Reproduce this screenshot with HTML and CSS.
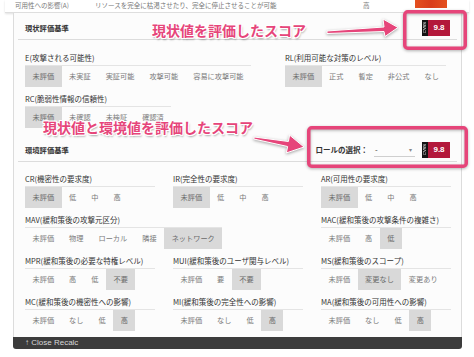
FILE: index.html
```html
<!DOCTYPE html>
<html lang="ja">
<head>
<meta charset="utf-8">
<title>CVSS</title>
<link rel="stylesheet" href="styles.css">
</head>
<body>
<div class="strip">
  <span>可用性への影響(A)</span>
  <span>リソースを完全に枯渇させたり、完全に停止させることが可能</span>
  <span>高</span>
  <span class="strip-bar"></span>
</div>
<div class="panel">
  <section class="sec">
    <div class="sec-head">
      <span class="title">現状評価基準</span>
      <span class="badge push"><span class="badge-tag">CVSS</span><span class="badge-score">9.8</span></span>
    </div>
    <div class="sec-body grid2">
      <div class="group">
        <div class="lbl">E(攻撃される可能性)</div>
        <div class="opts"><span class="opt on">未評価</span><span class="opt">未実証</span><span class="opt">実証可能</span><span class="opt">攻撃可能</span><span class="opt">容易に攻撃可能</span></div>
      </div>
      <div class="group">
        <div class="lbl">RL(利用可能な対策のレベル)</div>
        <div class="opts"><span class="opt on">未評価</span><span class="opt">正式</span><span class="opt">暫定</span><span class="opt">非公式</span><span class="opt">なし</span></div>
      </div>
      <div class="group">
        <div class="lbl">RC(脆弱性情報の信頼性)</div>
        <div class="opts"><span class="opt on">未評価</span><span class="opt">未確認</span><span class="opt">未検証</span><span class="opt">確認済</span></div>
      </div>
    </div>
  </section>
  <section class="sec env">
    <div class="sec-head">
      <span class="title">環境評価基準</span>
      <span class="role push">ロールの選択：</span>
      <span class="select"><span>-</span><span class="caret">▾</span></span>
      <span class="badge"><span class="badge-tag">CVSS</span><span class="badge-score">9.8</span></span>
    </div>
    <div class="sec-body grid3">
      <div class="group">
        <div class="lbl">CR(機密性の要求度)</div>
        <div class="opts"><span class="opt on">未評価</span><span class="opt">低</span><span class="opt">中</span><span class="opt">高</span></div>
      </div>
      <div class="group">
        <div class="lbl">IR(完全性の要求度)</div>
        <div class="opts"><span class="opt on">未評価</span><span class="opt">低</span><span class="opt">中</span><span class="opt">高</span></div>
      </div>
      <div class="group">
        <div class="lbl">AR(可用性の要求度)</div>
        <div class="opts"><span class="opt on">未評価</span><span class="opt">低</span><span class="opt">中</span><span class="opt">高</span></div>
      </div>
      <div class="group wide">
        <div class="lbl">MAV(緩和策後の攻撃元区分)</div>
        <div class="opts"><span class="opt">未評価</span><span class="opt">物理</span><span class="opt">ローカル</span><span class="opt">隣接</span><span class="opt on">ネットワーク</span></div>
      </div>
      <div class="group">
        <div class="lbl">MAC(緩和策後の攻撃条件の複雑さ)</div>
        <div class="opts"><span class="opt">未評価</span><span class="opt">高</span><span class="opt on">低</span></div>
      </div>
      <div class="group">
        <div class="lbl">MPR(緩和策後の必要な特権レベル)</div>
        <div class="opts"><span class="opt">未評価</span><span class="opt">高</span><span class="opt">低</span><span class="opt on">不要</span></div>
      </div>
      <div class="group">
        <div class="lbl">MUI(緩和策後のユーザ関与レベル)</div>
        <div class="opts"><span class="opt">未評価</span><span class="opt">要</span><span class="opt on">不要</span></div>
      </div>
      <div class="group">
        <div class="lbl">MS(緩和策後のスコープ)</div>
        <div class="opts"><span class="opt">未評価</span><span class="opt on">変更なし</span><span class="opt">変更あり</span></div>
      </div>
      <div class="group">
        <div class="lbl">MC(緩和策後の機密性への影響)</div>
        <div class="opts"><span class="opt">未評価</span><span class="opt">なし</span><span class="opt">低</span><span class="opt on">高</span></div>
      </div>
      <div class="group">
        <div class="lbl">MI(緩和策後の完全性への影響)</div>
        <div class="opts"><span class="opt">未評価</span><span class="opt">なし</span><span class="opt">低</span><span class="opt on">高</span></div>
      </div>
      <div class="group">
        <div class="lbl">MA(緩和策後の可用性への影響)</div>
        <div class="opts"><span class="opt">未評価</span><span class="opt">なし</span><span class="opt">低</span><span class="opt on">高</span></div>
      </div>
    </div>
  </section>
</div>
<div class="bar">↑ Close Recalc</div>

<svg class="marks" width="474" height="357" viewBox="0 0 474 357" xmlns="http://www.w3.org/2000/svg">
  <rect class="box" x="404.75" y="11.75" width="60.5" height="36.5" rx="3"/>
  <rect class="box" x="308.75" y="127.75" width="157.5" height="38.5" rx="3"/>
  <polygon class="arrow" points="327,31 384,27 383,19 398,27.5 385,36.5 384,31.5 327,33.5"/>
  <polygon class="arrow" points="254.2,137 288.4,141.5 289.6,135.1 304,147 286.4,152.9 287.6,146.5 253.8,139"/>
</svg>
<div class="note note-1">現状値を評価したスコア</div>
<div class="note note-2">現状値と環境値を評価したスコア</div>
</body>
</html>
```
FILE: styles.css
```css
* { box-sizing: border-box; margin: 0; padding: 0; }

body {
  margin: 0;
  width: 474px;
  height: 357px;
  overflow: hidden;
  position: relative;
  background: #fff;
  color: #333;
  font-family: "Noto Sans CJK JP", "Liberation Sans", sans-serif;
}

.strip {
  height: 13px;
  margin: 0 5px;
  padding-left: 10px;
  background: #fff;
  border-bottom: 1px solid #dedede;
  box-shadow: 0 1px 2px rgba(0,0,0,.12);
  display: grid;
  grid-template-columns: 80px 268px 52px 32px;
  align-items: start;
  font-size: 6.5px;
  line-height: 10px;
  color: #777;
  white-space: nowrap;
}
.strip-bar {
  height: 8px;
  background: linear-gradient(90deg, #e4501f, #d93d1a 50%, #e4501f);
}

.panel {
  margin-left: 13px;
  width: 449px;
  padding: 0 4px;
  border-left: 1px solid #dcdcdc;
  border-right: 1px solid #dcdcdc;
  background: #fcfcfc;
}

.sec-head {
  display: flex;
  align-items: center;
  padding: 7px 7px 3px 7px;
  border-bottom: 1px solid #dcdcdc;
}
.env .sec-head { padding-top: 8px; }
.title {
  font-size: 7.3px;
  font-weight: 700;
  line-height: 16px;
  color: #333;
}
.push { margin-left: auto; }

.badge {
  display: flex;
  height: 16px;
}
.badge-tag {
  width: 6px;
  background: #141414;
  color: #fff;
  font-family: "Liberation Sans", sans-serif;
  font-size: 4px;
  line-height: 6px;
  writing-mode: vertical-rl;
  transform: rotate(180deg);
  text-align: center;
  overflow: hidden;
}
.badge-score {
  width: 22px;
  background: #b3183b;
  color: #fff;
  font-family: "Liberation Sans", sans-serif;
  font-weight: 700;
  font-size: 8px;
  line-height: 16px;
  text-align: center;
}

.role {
  font-size: 7.5px;
  font-weight: 700;
  line-height: 16px;
}
.select {
  width: 41px;
  height: 14px;
  margin: 0 7px 0 6px;
  padding: 0 3px 0 1px;
  display: flex;
  align-items: center;
  justify-content: space-between;
  border-bottom: 1px solid #cfcfcf;
  font-family: "Liberation Sans", sans-serif;
  font-size: 8px;
  color: #444;
}
.caret { font-size: 6px; color: #888; }

.sec-body { padding: 12px 0 0 7px; }
.env .sec-body { padding-top: 11px; }

.grid2 {
  display: grid;
  grid-template-columns: 260px 1fr;
}
.grid3 {
  display: grid;
  grid-template-columns: 148px 148px 1fr;
}

.group {
  justify-self: start;
  margin-bottom: 6px;
}
.grid3 .group { min-width: 130px; }
.group.wide { grid-column: span 2; }

.lbl {
  font-size: 7.5px;
  line-height: 11px;
  padding-bottom: 2px;
  border-bottom: 1px solid #e4e4e4;
  color: #333;
  white-space: nowrap;
}
.opts {
  display: flex;
  height: 21px;
}
.opt {
  padding: 0 7.5px;
  font-size: 7.2px;
  line-height: 21px;
  color: #7a7a7a;
  white-space: nowrap;
}
.opt.on { background: #d9d9d9; color: #6a6a6a; }

.bar {
  margin-left: 13px;
  width: 449px;
  height: 12px;
  padding-left: 12px;
  background: #3c3c3c;
  border-radius: 0 0 3px 3px;
  color: #d8d8d8;
  font-family: "Liberation Sans", sans-serif;
  font-size: 8px;
  line-height: 12px;
}

.marks {
  position: absolute;
  left: 0;
  top: 0;
  pointer-events: none;
}
.box {
  fill: none;
  stroke: #e6457a;
  stroke-width: 3.5;
  filter: drop-shadow(0 1px 1.5px rgba(0,0,0,.3));
}
.arrow {
  fill: #e6457a;
  stroke: #fff;
  stroke-width: 1;
  stroke-linejoin: round;
  filter: drop-shadow(0 1px 1.5px rgba(0,0,0,.35));
}

.note {
  position: absolute;
  font-size: 14px;
  line-height: 14px;
  font-weight: 700;
  color: #e6457a;
  white-space: nowrap;
  text-shadow: -1px -1px 0 #fff, 1px -1px 0 #fff, -1px 1px 0 #fff, 1px 1px 0 #fff,
    0 -1px 0 #fff, 0 1px 0 #fff, -1px 0 0 #fff, 1px 0 0 #fff,
    1px 2px 2px rgba(0,0,0,.35);
}
.note-1 { left: 152px; top: 23px; }
.note-2 { left: 43px; top: 120px; }
```
